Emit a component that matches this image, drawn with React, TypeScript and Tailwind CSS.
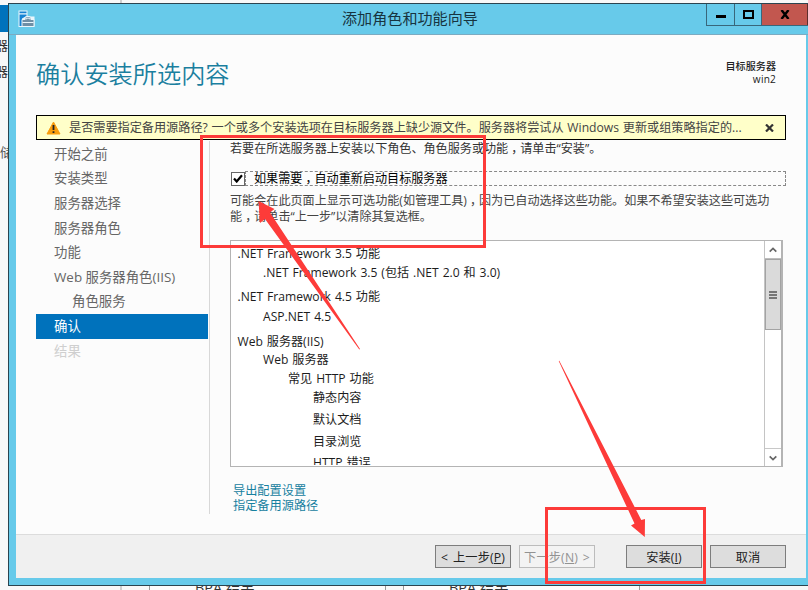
import React from "react";

const FONT = "font-['Open_Sans','Noto_Sans_CJK_SC',sans-serif]";

type Row = { text: string; cls: string };

const steps: Row[] = [
  { text: "开始之前", cls: "pl-[18px] text-[#666]" },
  { text: "安装类型", cls: "pl-[18px] text-[#666]" },
  { text: "服务器选择", cls: "pl-[18px] text-[#666]" },
  { text: "服务器角色", cls: "pl-[18px] text-[#666]" },
  { text: "功能", cls: "pl-[18px] text-[#666]" },
  { text: "Web 服务器角色(IIS)", cls: "pl-[18px] text-[#666]" },
  { text: "角色服务", cls: "pl-[36px] text-[#666]" },
  { text: "确认", cls: "pl-[18px] bg-[#0072bc] text-white" },
  { text: "结果", cls: "pl-[18px] text-[#cfcfcf]" },
];

const features: Row[] = [
  { text: ".NET Framework 3.5 功能", cls: "pl-[6.500px] mt-[4px] h-[18px]" },
  { text: ".NET Framework 3.5 (包括 .NET 2.0 和 3.0)", cls: "pl-[32px] mt-px h-[18px]" },
  { text: ".NET Framework 4.5 功能", cls: "pl-[6.500px] mt-[6px] h-[18px]" },
  { text: "ASP.NET 4.5", cls: "pl-[32px] mt-[2px] h-[18px]" },
  { text: "Web 服务器(IIS)", cls: "pl-[6.500px] mt-[7px] h-[18px]" },
  { text: "Web 服务器", cls: "pl-[32px] h-[18px]" },
  { text: "常见 HTTP 功能", cls: "pl-[57px] mt-px h-[18px]" },
  { text: "静态内容", cls: "pl-[82px] mt-px h-[18px]" },
  { text: "默认文档", cls: "pl-[82px] mt-[4px] h-[18px]" },
  { text: "目录浏览", cls: "pl-[82px] mt-[4px] h-[18px]" },
  { text: "HTTP 错误", cls: "pl-[82px] mt-[3px] h-[18px]" },
];

// Comma set in the middle of a full-width cell.
function Comma() {
  return <span className="inline-block w-[1em] text-center [font-feature-settings:'halt']">，</span>;
}

function ServerIcon() {
  return (
    <svg width="17" height="18" viewBox="0 0 17 18">
      <path d="M.5.5h9v6h7v10.500H.5z" fill="#e9f6fc" />
      <path d="M1.500 1.500h7v1.800h-7zM1.500 4.600h7v1.500l-4.500 2.500v7.400h-2.500z" fill="#1683d3" />
      <path d="M4 9.500h3V8q0-1.500 2-1.500h2q2 0 2 1.500v1.500h3v7H4z" fill="#6f8fa5" stroke="#e9f6fc" />
      <path d="M8 9.500V8.200h4v1.300M4.500 12.500h11" fill="none" stroke="#e9f6fc" />
    </svg>
  );
}

function TitleBar() {
  return (
    <div className="flex h-[31px] shrink-0 items-start border-b border-[#7cabc1]">
      <div className="mt-[6px] ml-[9px] w-[17px]"><ServerIcon /></div>
      <div className="mt-[3px] ml-[307px] w-[200px] text-[15.100px] leading-[22px] text-[#173440]">添加角色和功能向导</div>
      <div className="ml-auto flex h-[22px] border-b border-l border-[#38677b]">
        <div className="flex w-[28px] justify-center border-r border-[#38677b] pt-[11px]">
          <div className="h-[3px] w-[10px] bg-black" />
        </div>
        <div className="flex w-[27px] justify-center border-r border-[#38677b] pt-[6px]">
          <div className="h-[9px] w-[11px] border-2 border-black" />
        </div>
        <div className="flex w-[46px] justify-center border-r border-[#5c2f2d] bg-[#c2574f] pt-[6px]">
          <svg width="10" height="9" viewBox="0 0 10 9"><path d="M1.500 0l7 9M8.500 0l-7 9" stroke="#000" strokeWidth="2.400" /></svg>
        </div>
      </div>
    </div>
  );
}

function WarningBar() {
  return (
    <div className="mx-5 flex h-[25px] shrink-0 items-center border border-black bg-[#ffffc9] text-[#444]">
      <svg className="ml-[9px] shrink-0" width="15" height="14" viewBox="0 0 15 14">
        <path d="M7.500 1L14 13H1z" fill="#f99d0c" stroke="#f99d0c" strokeLinejoin="round" />
        <path d="M7.500 4v5M7.500 10.300v1.700" stroke="#222" strokeWidth="1.800" />
      </svg>
      <div className="mt-px ml-[8px] w-[696px] shrink-0 text-[12.150px] leading-[20px] whitespace-nowrap [word-spacing:0.6px]">
        是否需要指定备用源路径? 一个或多个安装选项在目标服务器上缺少源文件。服务器将尝试从 Windows 更新或组策略指定的...
      </div>
      <svg className="shrink-0" width="9" height="8" viewBox="0 0 9 8"><path d="M1 .5l7 7M8 .5l-7 7" stroke="#333" strokeWidth="2.200" /></svg>
    </div>
  );
}

function Steps() {
  return (
    <div className="mt-px ml-5 h-[373px] w-[174px] shrink-0 border-r border-[#d8d8d8]">
      <div className="w-[172px] pt-[0.600px]">
        {steps.map((s) => (
          <div key={s.text} className={"h-[24.650px] text-[13.400px] leading-[25px] whitespace-nowrap " + s.cls}>{s.text}</div>
        ))}
      </div>
    </div>
  );
}

function ScrollBar() {
  return (
    <div className="flex w-[17px] shrink-0 flex-col border-l border-[#c4c4c4] bg-white">
      <div className="flex h-[18px] shrink-0 items-center justify-center border-b border-[#bdbdbd]">
        <svg width="8" height="6" viewBox="0 0 8 6"><path d="M.7 4.700L4 1.500l3.300 3.200" fill="none" stroke="#666" strokeWidth="1.700" /></svg>
      </div>
      <div className="flex h-[71px] shrink-0 flex-col items-center justify-center gap-px border border-[#a3a3a3] bg-[#dadada]">
        <div className="h-[2px] w-[8px] bg-[#777]" />
        <div className="h-[2px] w-[8px] bg-[#777]" />
        <div className="h-[2px] w-[8px] bg-[#777]" />
      </div>
      <div className="mt-auto flex h-[18px] items-center justify-center border-t border-[#c8c8c8]">
        <svg width="8" height="6" viewBox="0 0 8 6"><path d="M.7 1.300L4 4.500l3.300-3.200" fill="none" stroke="#666" strokeWidth="1.700" /></svg>
      </div>
    </div>
  );
}

function MainPane() {
  return (
    <div className="ml-5 flex w-[560px] flex-col text-[12.100px] text-[#333]">
      <div className="h-[16px] pt-px leading-[16px] whitespace-nowrap">若要在所选服务器上安装以下角色、角色服务或功能<Comma />请单击“安装”。</div>
      <div className="mt-[15px] flex h-[15px] items-center">
        <div className="ml-px flex h-[14px] w-[14px] shrink-0 items-center justify-center border border-[#666] bg-white">
          <svg width="10" height="9" viewBox="0 0 10 9"><path d="M1 4.500l2.700 3L9 1.200" fill="none" stroke="#000" strokeWidth="2.200" /></svg>
        </div>
        <div className="h-[15px] w-[541px] border border-dashed border-[#888] pl-[8px] leading-[13px] text-black">如果需要<Comma />自动重新启动目标服务器</div>
      </div>
      <div className="mt-[6px] h-[32px] pt-px leading-[16px] whitespace-nowrap text-[#444]">
        可能会在此页面上显示可选功能(如管理工具)<Comma />因为已自动选择这些功能。如果不希望安装这些可选功<br />能<Comma />请单击“上一步”以清除其复选框。
      </div>
      <div className="mt-[16px] flex h-[227px] w-[553px] border border-r-2 border-[#b4b4b4] bg-white">
        <div className="h-[224px] flex-1 overflow-hidden text-[#1c1c1c] [word-spacing:0.8px]">
          {features.map((f) => (
            <div key={f.text} className={"leading-[18px] whitespace-nowrap " + f.cls}>{f.text}</div>
          ))}
        </div>
        <ScrollBar />
      </div>
      <div className="mt-[16px] pl-[3px] text-[12.200px] leading-[15px] text-[#16809f]">
        <div>导出配置设置</div>
        <div>指定备用源路径</div>
      </div>
    </div>
  );
}

function Btn({ children, cls }: { children: React.ReactNode; cls: string }) {
  return (
    <div className={"h-[23px] w-[76px] border pt-px text-center text-[12.200px] leading-[21px] tracking-[0.15px] whitespace-nowrap [word-spacing:1.5px] " + cls}>
      {children}
    </div>
  );
}

const ACTIVE = "border-[#7d7d7d] bg-[#dddddd] text-[#222]";

function Footer() {
  return (
    <div className="flex h-[44px] shrink-0 border-t border-[#dcdcdc] bg-[#f0f0f0] pt-[10px] pl-[419px]">
      <Btn cls={ACTIVE}>&lt; 上一步(<u>P</u>)</Btn>
      <Btn cls="ml-[8px] border-[#bcbcbc] bg-[#f3f3f3] text-[#929292]">下一步(<u>N</u>) &gt;</Btn>
      <Btn cls={"ml-[31px] " + ACTIVE}>安装(<u>I</u>)</Btn>
      <Btn cls={"ml-[8px] " + ACTIVE}>取消</Btn>
    </div>
  );
}

export default function App() {
  return (
    <div className={"relative h-[590px] w-[808px] overflow-hidden bg-[#f8f8f8] " + FONT}>
      <div className="absolute top-[5px] left-0 h-[27px] w-[8px] bg-[#0072bc]" />
      <div className="absolute top-[36px] left-[-5px] text-[13px] leading-[18px] text-[#333]">器</div>
      <div className="absolute top-[62px] left-[-5px] text-[13px] leading-[18px] text-[#333]">器</div>
      <div className="absolute top-[143px] left-0 text-[13px] leading-[18px] text-[#555]">储</div>
      <div className="absolute top-0 left-[120px] h-[3px] w-[2px] bg-[#cfcfcf]" />
      <div className="absolute top-[585px] left-[120px] h-[5px] w-[2px] bg-[#cfcfcf]" />
      <div className="absolute top-[585px] left-[149px] h-[5px] w-[237px] border-x border-[#999] bg-[#fcfcfc]" />
      <div className="absolute top-[585px] left-[403px] h-[5px] w-[237px] border-x border-[#999] bg-[#fcfcfc]" />
      <div className="absolute top-[579px] left-[195px] text-[14.400px] leading-[18px] whitespace-nowrap text-[#333]">BPA 结果</div>
      <div className="absolute top-[579px] left-[449px] text-[14.400px] leading-[18px] whitespace-nowrap text-[#333]">BPA 结果</div>

      <div className="absolute top-[3px] left-[8px] flex h-[583px] w-[800px] flex-col border border-r-0 border-[#2b444f] bg-[#67caea]">
        <TitleBar />
        <div className="ml-[7px] flex h-[543px] w-[790px] shrink-0 flex-col bg-[#fcfcfc]">
          <div className="flex h-[80px] shrink-0 justify-between pr-[30px] pl-5">
            <div className="mt-[21px] text-[24.200px] leading-[36px] font-[350] text-[#1b7f9f]">确认安装所选内容</div>
            <div className="mt-[25px] text-right text-[10.100px] leading-[13px] text-[#222]">
              <div className="font-medium">目标服务器</div>
              <div className="tracking-[0.200px]">win2</div>
            </div>
          </div>
          <WarningBar />
          <div className="flex flex-1">
            <Steps />
            <MainPane />
          </div>
          <Footer />
        </div>
      </div>

      <svg className="absolute top-0 left-0" width="808" height="590" viewBox="0 0 808 590">
        <g fill="none" stroke="#fd3b39" strokeWidth="3">
          <rect x="201.500" y="136.500" width="283" height="110" />
          <rect x="546.500" y="508.500" width="158" height="74" />
        </g>
        <path d="M258.500 201L274.500 209L270 212.500L360 349L359.300 349.500L265 219L260 223z" fill="#fd3b39" />
        <path d="M644.800 537L631 525.500L634.500 523.500L558.700 361L559.300 360.700L641.300 520L645 519z" fill="#fd3b39" />
      </svg>
    </div>
  );
}
